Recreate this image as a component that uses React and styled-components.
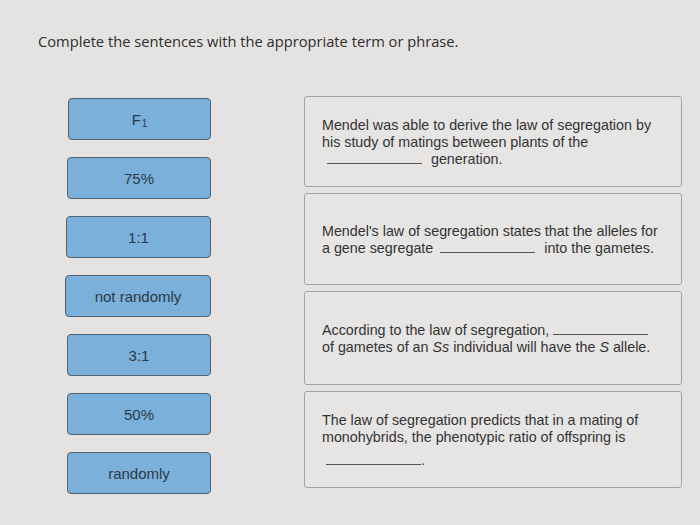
import React from "react";
import styled, { createGlobalStyle } from "styled-components";

const Global = createGlobalStyle`
  html, body { margin: 0; padding: 0; background: #e4e3e1; }
  body { width: 700px; height: 525px; overflow: hidden; }
`;

const Page = styled.div`
  width: 700px;
  height: 525px;
  box-sizing: border-box;
  padding: 31px 18px 0 38px;
  background: #e4e3e1;
  font-family: "Liberation Sans", Arial, sans-serif;
  color: #333;
`;

const Title = styled.h1`
  margin: 0;
  font-family: "Open Sans", "Liberation Sans", sans-serif;
  font-weight: 400;
  font-size: 14.7px;
  line-height: 20px;
  color: #2e2e2e;
`;

const Board = styled.div`
  display: flex;
  align-items: flex-start;
  margin-top: 45px;
  padding-left: 28px;
`;

const Choices = styled.div`
  display: flex;
  flex-direction: column;
  gap: 17px;
  padding-top: 2px;
  width: 145px;
`;

const Choice = styled.div`
  height: 42px;
  box-sizing: border-box;
  border: 1px solid #4f6274;
  border-radius: 4px;
  background: #7ab0da;
  display: flex;
  align-items: center;
  justify-content: center;
  font-size: 15px;
  color: #2c3a48;
  margin-left: ${(p) => p.$shift || 0}px;
`;

const Sub = styled.span`
  font-size: 10px;
  position: relative;
  top: 4px;
  margin-left: 1px;
`;

const Targets = styled.div`
  display: flex;
  flex-direction: column;
  gap: 6px;
  margin-left: 93px;
  width: 378px;
`;

const Card = styled.div`
  height: ${(p) => p.$h}px;
  box-sizing: border-box;
  border: 1px solid #a3a3a1;
  border-radius: 3px;
  background: #e6e5e3;
  display: flex;
  align-items: center;
  padding: 2px 16px 0 17px;
`;

const Sentence = styled.p`
  margin: 0;
  width: 338px;
  font-size: 14.3px;
  line-height: 17px;
  color: #333;
`;

const Blank = styled.span`
  display: inline-block;
  width: 95px;
  height: ${(p) => p.$h || 12}px;
  border-bottom: 1px solid #555;
  margin: 0 ${(p) => p.$r || 0}px 0 ${(p) => p.$l || 0}px;
  vertical-align: baseline;
`;

export default function App() {
  return (
    <Page>
      <Global />
      <Title>Complete the sentences with the appropriate term or phrase.</Title>
      <Board>
        <Choices>
          <Choice $shift={2}>
            F<Sub>1</Sub>
          </Choice>
          <Choice $shift={1}>75%</Choice>
          <Choice>1:1</Choice>
          <Choice $shift={-1}>not randomly</Choice>
          <Choice $shift={1}>3:1</Choice>
          <Choice $shift={1}>50%</Choice>
          <Choice $shift={1}>randomly</Choice>
        </Choices>
        <Targets>
          <Card $h={91}>
            <Sentence>
              Mendel was able to derive the law of segregation by his study of
              matings between plants of the <Blank $l={5} $r={5} /> generation.
            </Sentence>
          </Card>
          <Card $h={92}>
            <Sentence>
              Mendel's law of segregation states that the alleles for a gene
              segregate <Blank $l={3} $r={5} /> into the gametes.
            </Sentence>
          </Card>
          <Card $h={94}>
            <Sentence>
              According to the law of segregation, <Blank /> of gametes of an{" "}
              <i>Ss</i> individual will have the <i>S</i> allele.
            </Sentence>
          </Card>
          <Card $h={97}>
            <Sentence>
              The law of segregation predicts that in a mating of monohybrids,
              the phenotypic ratio of offspring is <Blank $l={4} $h={18} />.
            </Sentence>
          </Card>
        </Targets>
      </Board>
    </Page>
  );
}
